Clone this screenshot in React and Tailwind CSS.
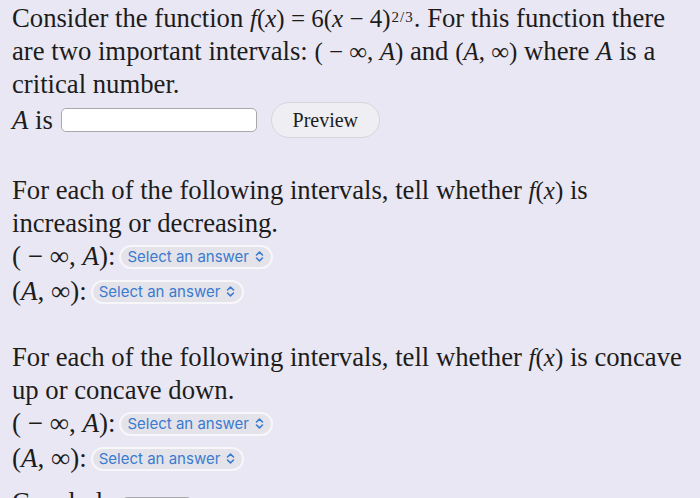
import React from "react";

const V = ({ children }) => <i className="italic">{children}</i>;

function Chevrons() {
  return (
    <svg width="9" height="11" viewBox="0 0 9 11" fill="none" stroke="currentColor" strokeWidth="1.6" strokeLinecap="round" strokeLinejoin="round">
      <path d="M1.5 4 L4.5 1.2 L7.5 4" />
      <path d="M1.5 7 L4.5 9.8 L7.5 7" />
    </svg>
  );
}

function Select() {
  return (
    <span className="inline-flex h-[24px] items-center gap-[6px] rounded-full border-2 border-[#f7f6fb] bg-[#e4e3ea] pl-[6px] pr-[7px] font-['Inter',sans-serif] text-[15px] leading-none text-[#3a7bd0]">
      <span>Select an answer</span>
      <Chevrons />
    </span>
  );
}

function Row({ label }) {
  return (
    <div className="flex h-[35px] items-center gap-[4px]">
      <span className="text-[27px] leading-none">{label}</span>
      <Select />
    </div>
  );
}

const NegInf = (
  <span>
    ( − ∞, <V>A</V>):
  </span>
);
const PosInf = (
  <span>
    (<V>A</V>, ∞):
  </span>
);

export default function App() {
  return (
    <div className="min-h-[498px] overflow-hidden bg-[#e9e7f3] pl-[12px] pr-[2px] pt-[2px] font-['Liberation_Serif',serif] text-[26.7px] leading-[32px] text-[#1c1c1c]">
      <p>
        Consider the function{" "}
        <span className="text-[25px]">
          <V>f</V>(<V>x</V>) = 6(<V>x</V> − 4)
          <sup className="relative -top-[5px] ml-[1px] text-[15px] leading-none tracking-[1px]">2/3</sup>
        </span>
        . For this function there are two important intervals:{" "}
        <span className="text-[25px]">
          ( − ∞, <V>A</V>)
        </span>{" "}
        and{" "}
        <span className="text-[25px]">
          (<V>A</V>, ∞)
        </span>{" "}
        where <V>A</V> is a critical number.
      </p>
      <div className="flex h-[40px] items-center">
        <span>
          <V>A</V> is
        </span>
        <span className="ml-[8px] h-[24px] w-[196px] rounded-[5px] border border-[#a9a8ad] bg-white" />
        <span className="ml-[14px] flex h-[36px] w-[109px] items-center justify-center rounded-full border border-[#d6d5da] bg-[#efeef2] text-[20px] leading-none">
          Preview
        </span>
      </div>

      <p className="mt-[34px]">
        For each of the following intervals, tell whether{" "}
        <span className="text-[25px]">
          <V>f</V>(<V>x</V>)
        </span>{" "}
        is increasing or decreasing.
      </p>
      <Row label={NegInf} />
      <Row label={PosInf} />

      <p className="mt-[32px]">
        For each of the following intervals, tell whether{" "}
        <span className="text-[25px]">
          <V>f</V>(<V>x</V>)
        </span>{" "}
        is concave up or concave down.
      </p>
      <Row label={NegInf} />
      <Row label={PosInf} />

      <div className="mt-[10px] flex items-start gap-[8px]">
        <span>Conclude</span>
        <span className="mt-[11px] h-[24px] w-[70px] rounded-[5px] border border-[#a9a8ad] bg-white" />
      </div>
    </div>
  );
}
